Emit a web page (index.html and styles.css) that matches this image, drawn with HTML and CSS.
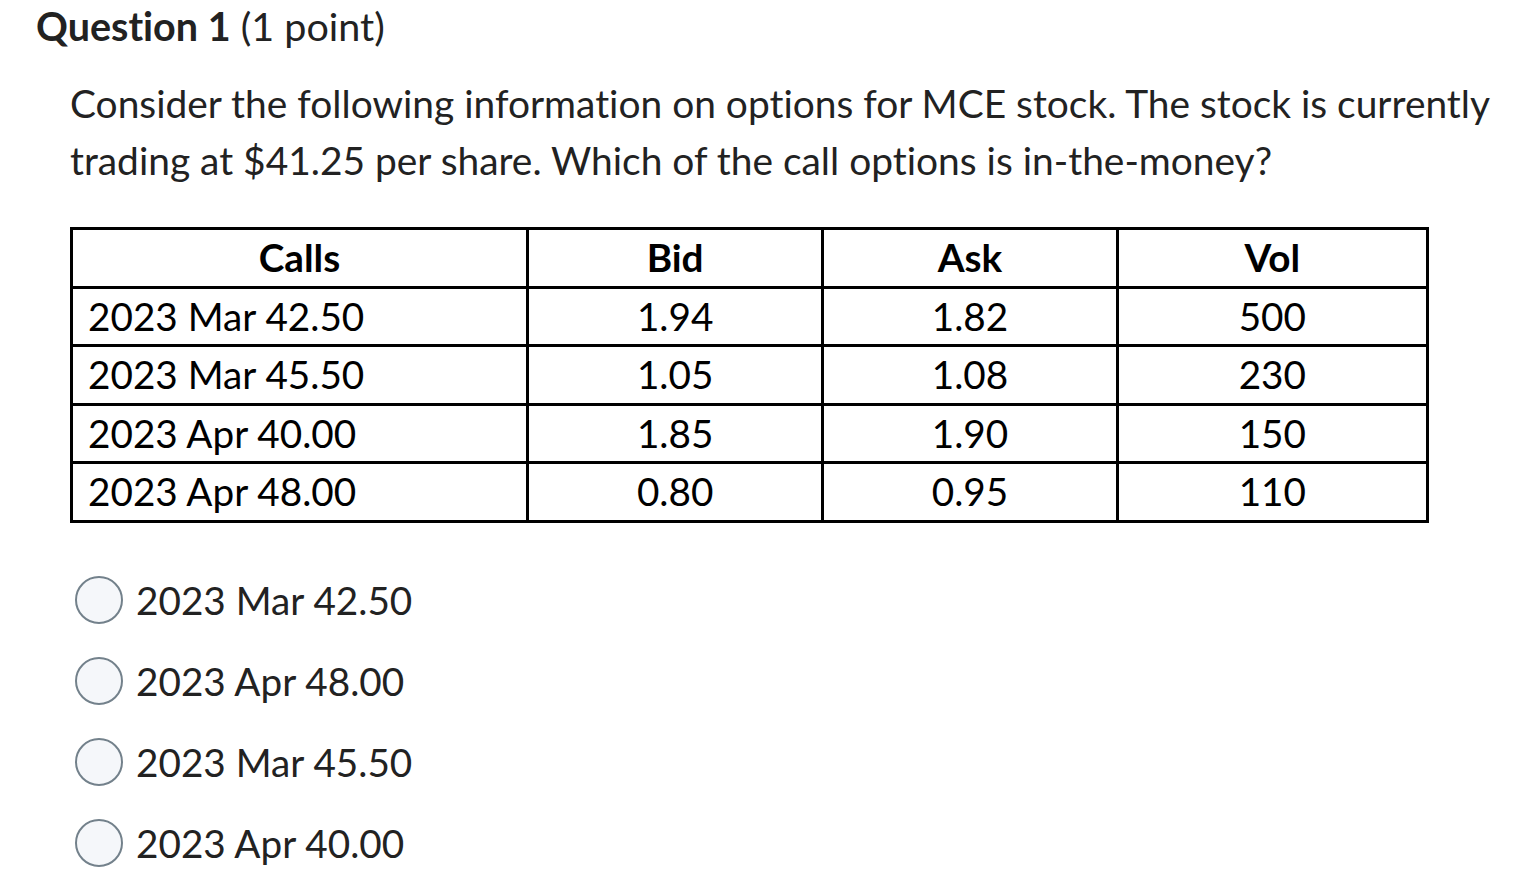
FILE: index.html
```html
<!DOCTYPE html>
<html>
<head>
<meta charset="utf-8">
<link rel="stylesheet" href="styles.css">
</head>
<body>
<div class="question">
  <h2 class="q-title"><span class="q-name">Question 1</span> <span class="q-points">(1 point)</span></h2>
  <div class="q-body">
    <p class="q-text">Consider the following information on options for MCE stock. The stock is currently trading at $41.25 per share. Which of the call options is in-the-money?</p>
    <table class="opts">
      <colgroup>
        <col class="c1"><col class="c2"><col class="c3"><col class="c4">
      </colgroup>
      <thead>
        <tr><th>Calls</th><th>Bid</th><th>Ask</th><th>Vol</th></tr>
      </thead>
      <tbody>
        <tr><td class="name">2023 Mar 42.50</td><td>1.94</td><td>1.82</td><td>500</td></tr>
        <tr><td class="name">2023 Mar 45.50</td><td>1.05</td><td>1.08</td><td>230</td></tr>
        <tr><td class="name">2023 Apr 40.00</td><td>1.85</td><td>1.90</td><td>150</td></tr>
        <tr><td class="name">2023 Apr 48.00</td><td>0.80</td><td>0.95</td><td>110</td></tr>
      </tbody>
    </table>
    <div class="answers">
      <label class="answer"><span class="radio"></span><span class="a-text">2023 Mar 42.50</span></label>
      <label class="answer"><span class="radio"></span><span class="a-text">2023 Apr 48.00</span></label>
      <label class="answer"><span class="radio"></span><span class="a-text">2023 Mar 45.50</span></label>
      <label class="answer"><span class="radio"></span><span class="a-text">2023 Apr 40.00</span></label>
    </div>
  </div>
</div>
</body>
</html>
```

FILE: styles.css
```css
html, body {
  margin: 0;
  padding: 0;
  background: #ffffff;
}
body {
  font-family: Lato, "Liberation Sans", sans-serif;
  color: #222;
  font-variant-ligatures: none;
}
.question {
  padding: 2px 0 0 36px;
}
.q-title {
  margin: 0;
  font-size: 39.5px;
  line-height: 48px;
  font-weight: 400;
}
.q-name {
  font-weight: 700;
}
.q-body {
  padding-left: 34px;
}
.q-text {
  margin: 25px 0 0 0;
  font-size: 38.9px;
  line-height: 57px;
  width: 1440px;
}
.opts {
  margin-top: 38px;
  border-collapse: collapse;
  width: 1359px;
  color: #000;
  font-size: 38.7px;
  border: 3px solid #000;
}
.c1 { width: 457px; }
.c2 { width: 296px; }
.c3 { width: 295px; }
.c4 { width: 311px; }
.opts th, .opts td {
  border: 3px solid #000;
  padding: 0 15px;
  text-align: center;
  line-height: 55.5px;
}
.opts th {
  font-weight: 700;
}
.opts td.name {
  text-align: left;
}
.answers {
  margin-top: 53px;
  display: flex;
  flex-direction: column;
  gap: 33px;
}
.answer {
  display: flex;
  align-items: center;
  gap: 13px;
  font-size: 38.7px;
  line-height: 48px;
  color: #222;
}
.radio {
  width: 44px;
  height: 44px;
  border: 2px solid #73818b;
  border-radius: 50%;
  background: #f5f7fa;
  margin-left: 5px;
  flex: none;
}
```
